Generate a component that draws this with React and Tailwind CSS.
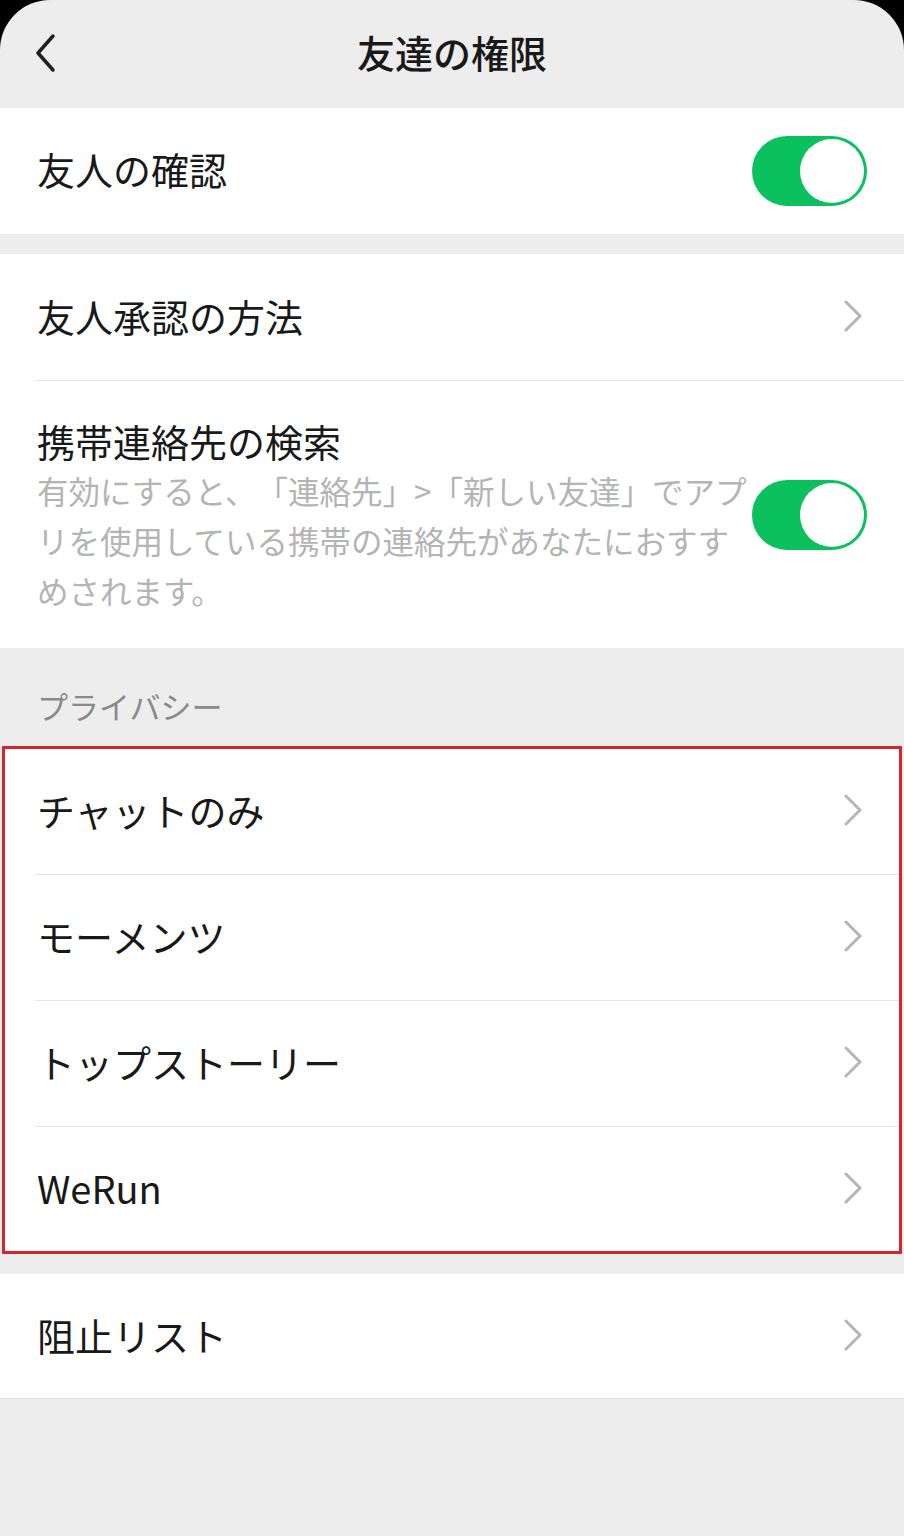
import React from "react";

const font = { fontFamily: '"Noto Sans CJK JP", "Noto Sans", sans-serif' };

function Chevron() {
  return (
    <svg width="18" height="32" viewBox="0 0 18 32" className="shrink-0">
      <polyline points="2,2 16,16 2,30" fill="none" stroke="#b5b5b5" strokeWidth="3" strokeLinejoin="round" strokeLinecap="round" />
    </svg>
  );
}

function Toggle() {
  return (
    <div className="w-[115px] h-[70px] rounded-full bg-[#0ac15e] p-[3px] flex justify-end shrink-0">
      <div className="w-[64px] h-[64px] rounded-full bg-white" />
    </div>
  );
}

function BoxRow({ label, divider, last }) {
  return (
    <div className="bg-white">
      <div className={`${last ? "h-[124px] pt-[1px]" : "h-[125px]"} flex items-center justify-between pl-[32px] pr-[37px] pb-[3px]`}>
        <span className="text-[38px] text-[#191919] leading-none">{label}</span>
        <Chevron />
      </div>
      {divider && <div className="ml-[30px] h-px bg-[#e6e6e6]" />}
    </div>
  );
}

export default function App() {
  return (
    <div className="bg-black w-[904px] h-[1536px]" style={font}>
      <div className="bg-[#ededed] rounded-t-[50px] h-full flex flex-col">
        {/* header */}
        <div className="h-[108px] relative flex items-center justify-center pb-[5px]">
          <svg width="26" height="40" viewBox="0 0 26 40" className="absolute left-[32px] top-[33px]">
            <polyline points="21,3 6,20 21,37" fill="none" stroke="#1f1f1f" strokeWidth="3.5" strokeLinecap="round" strokeLinejoin="round" />
          </svg>
          <span className="text-[38px] font-medium text-[#191919] leading-none">友達の権限</span>
        </div>

        {/* section 1 */}
        <div className="bg-white h-[126px] flex items-center justify-between pl-[37px] pr-[37px]">
          <span className="text-[38px] text-[#191919] leading-none pb-[4px]">友人の確認</span>
          <Toggle />
        </div>

        <div className="h-[20px]" />

        {/* section 2 */}
        <div className="bg-white">
          <div className="h-[126px] flex items-center justify-between pl-[37px] pr-[42px] pb-[3px]">
            <span className="text-[38px] text-[#191919] leading-none">友人承認の方法</span>
            <Chevron />
          </div>
          <div className="ml-[35px] h-px bg-[#e6e6e6]" />
          <div className="h-[267px] flex items-center justify-between pl-[37px] pr-[37px]">
            <div className="flex flex-col pt-[2px] [text-spacing-trim:space-all]">
              <span className="text-[38px] text-[#191919] leading-[48px]">携帯連絡先の検索</span>
              <span className="text-[31.5px] text-[#b4b4b4] leading-[50px] whitespace-nowrap">有効にすると、「連絡先」&gt;「新しい友達」でアプ</span>
              <span className="text-[31.5px] text-[#b4b4b4] leading-[50px] whitespace-nowrap">リを使用している携帯の連絡先があなたにおすす</span>
              <span className="text-[31.5px] text-[#b4b4b4] leading-[50px] whitespace-nowrap">めされます。</span>
            </div>
            <Toggle />
          </div>
        </div>

        {/* privacy label */}
        <div className="h-[98px] flex items-end pl-[37px] pb-[25px]">
          <span className="text-[31px] text-[#8a8a8a] leading-none">プライバシー</span>
        </div>

        {/* highlighted group */}
        <div className="mx-[2px] border-[3px] border-[#d9232d] bg-white">
          <BoxRow label="チャットのみ" divider />
          <BoxRow label="モーメンツ" divider />
          <BoxRow label="トップストーリー" divider />
          <BoxRow label="WeRun" last />
        </div>

        <div className="h-[20px]" />

        <div className="bg-white h-[125px] flex items-center justify-between pl-[37px] pr-[42px] pb-[3px] border-b border-[#e2e2e2]">
          <span className="text-[38px] text-[#191919] leading-none">阻止リスト</span>
          <Chevron />
        </div>
      </div>
    </div>
  );
}
